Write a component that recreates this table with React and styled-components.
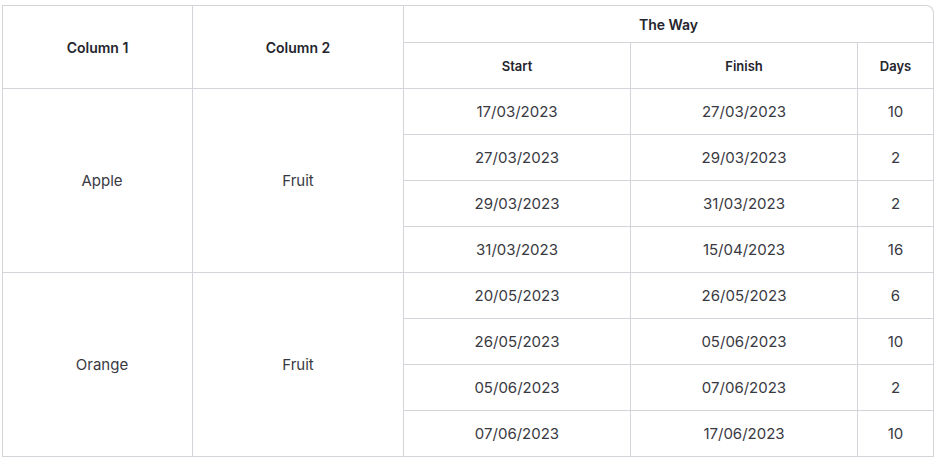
import React from "react";
import styled, { createGlobalStyle } from "styled-components";

const GlobalStyle = createGlobalStyle`
  html, body {
    margin: 0;
    background: #ffffff;
  }
  body {
    font-family: Inter, "Noto Sans", sans-serif;
    -webkit-font-smoothing: antialiased;
  }
`;

const groups = [
  {
    name: "Apple",
    kind: "Fruit",
    rows: [
      ["17/03/2023", "27/03/2023", 10],
      ["27/03/2023", "29/03/2023", 2],
      ["29/03/2023", "31/03/2023", 2],
      ["31/03/2023", "15/04/2023", 16],
    ],
  },
  {
    name: "Orange",
    kind: "Fruit",
    rows: [
      ["20/05/2023", "26/05/2023", 6],
      ["26/05/2023", "05/06/2023", 10],
      ["05/06/2023", "07/06/2023", 2],
      ["07/06/2023", "17/06/2023", 10],
    ],
  },
];

const widths = [191, 211, 227, 227, 76];

const Page = styled.div`
  padding: 5px 0 0 2px;
`;

const Table = styled.table`
  width: 932px;
  table-layout: fixed;
  border-collapse: separate;
  border-spacing: 0;
`;

const Col = styled.col`
  width: ${({ $w }) => $w}px;
`;

const Cell = styled.td`
  box-sizing: border-box;
  padding: 0;
  padding-left: ${({ $indent }) => ($indent ? "9px" : "0")};
  height: ${({ $h }) => $h || 46}px;
  text-align: center;
  vertical-align: middle;
  border-right: 1px solid #d4d4da;
  border-bottom: 1px solid #d4d4da;
  ${({ $first }) => ($first ? "border-left: 1px solid #d4d4da;" : "")}
  ${({ $top }) => ($top ? "border-top: 1px solid #d4d4da;" : "")}
  ${({ $round }) => ($round ? "border-top-right-radius: 8px;" : "")}
  font-size: 15px;
  font-weight: 400;
  color: #393942;
`;

const HeadCell = styled(Cell).attrs({ as: "th" })`
  font-size: ${({ $small }) => ($small ? 13 : 14)}px;
  font-weight: 600;
  color: #24242d;
`;

export default function App() {
  return (
    <Page>
      <GlobalStyle />
      <Table>
        <colgroup>
          {widths.map((w, i) => (
            <Col key={i} $w={w} />
          ))}
        </colgroup>
        <thead>
          <tr>
            <HeadCell rowSpan={2} $first $top $h={38}>Column 1</HeadCell>
            <HeadCell rowSpan={2} $top $h={38}>Column 2</HeadCell>
            <HeadCell colSpan={3} $top $round $h={38}>The Way</HeadCell>
          </tr>
          <tr>
            <HeadCell $small>Start</HeadCell>
            <HeadCell $small>Finish</HeadCell>
            <HeadCell $small>Days</HeadCell>
          </tr>
        </thead>
        <tbody>
          {groups.map((g) =>
            g.rows.map((r, i) => (
              <tr key={g.name + i}>
                {i === 0 && (
                  <>
                    <Cell rowSpan={g.rows.length} $first $indent>{g.name}</Cell>
                    <Cell rowSpan={g.rows.length}>{g.kind}</Cell>
                  </>
                )}
                <Cell>{r[0]}</Cell>
                <Cell>{r[1]}</Cell>
                <Cell>{r[2]}</Cell>
              </tr>
            ))
          )}
        </tbody>
      </Table>
    </Page>
  );
}
